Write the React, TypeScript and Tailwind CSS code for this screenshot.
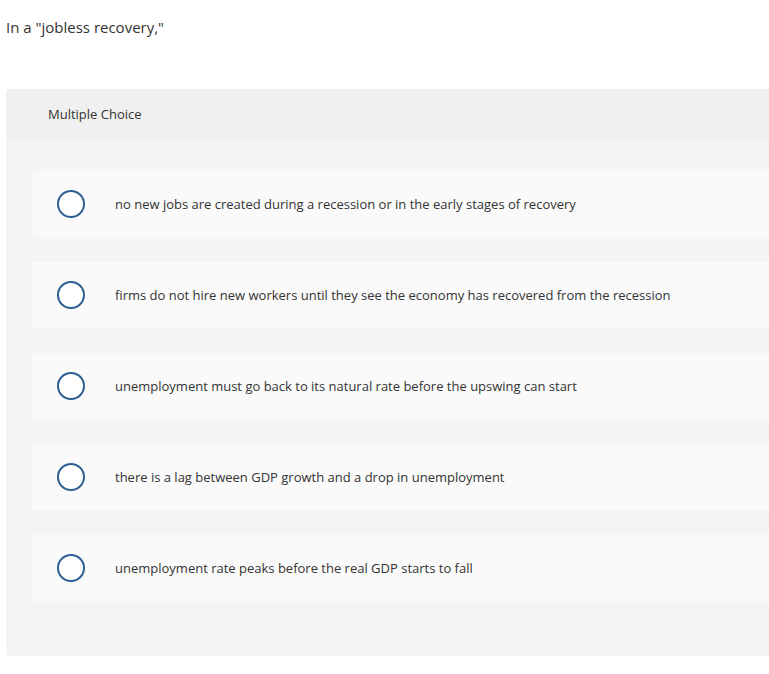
const options = [
  "no new jobs are created during a recession or in the early stages of recovery",
  "firms do not hire new workers until they see the economy has recovered from the recession",
  "unemployment must go back to its natural rate before the upswing can start",
  "there is a lag between GDP growth and a drop in unemployment",
  "unemployment rate peaks before the real GDP starts to fall",
];

function Option({ label }: { label: string }) {
  return (
    <label className="flex h-[66px] cursor-pointer items-center rounded-[2px] bg-[#fafafa]">
      <span className="ml-[25px] h-[28px] w-[28px] shrink-0 rounded-full border-2 border-[#2d5f92] bg-white" />
      <span className="ml-[30px] pt-[1px] text-[13px] text-[#333]">{label}</span>
    </label>
  );
}

export default function App() {
  return (
    <div className="min-h-[674px] w-[769px] overflow-hidden bg-white font-['Open_Sans',sans-serif] text-[#333]">
      <p className="pl-[6px] pt-[17px] text-[15px] leading-5">In a "jobless recovery,"</p>

      <section className="ml-[6px] mt-[52px] w-[800px] overflow-hidden rounded-[4px] bg-[#f4f4f4]">
        <div className="flex h-[50px] items-center bg-[#f0f0f0] pl-[42px] pt-[1px] text-[13px]">Multiple Choice</div>
        <div className="flex flex-col gap-[25px] pb-[55px] pl-[26px] pt-[32px]">
          {options.map((o) => (
            <Option key={o} label={o} />
          ))}
        </div>
      </section>
    </div>
  );
}
